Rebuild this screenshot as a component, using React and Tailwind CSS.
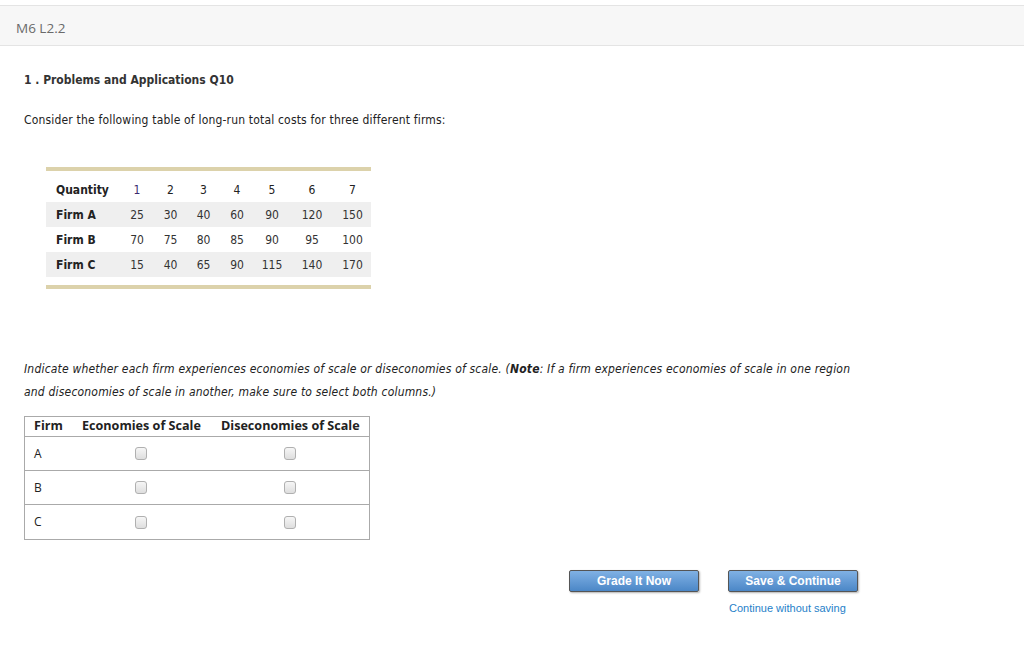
import React from "react";

const body = { fontFamily: '"DejaVu Sans Condensed", "DejaVu Sans", Verdana, sans-serif' };
const open = { fontFamily: '"Open Sans", "Noto Sans", sans-serif' };

const qty = [1, 2, 3, 4, 5, 6, 7];
const rows = [
  { name: "Firm A", vals: [25, 30, 40, 60, 90, 120, 150], shade: true },
  { name: "Firm B", vals: [70, 75, 80, 85, 90, 95, 100], shade: false },
  { name: "Firm C", vals: [15, 40, 65, 90, 115, 140, 170], shade: true },
];
const colW = ["w-[74px]", "w-[34px]", "w-[33px]", "w-[33px]", "w-[34px]", "w-[36px]", "w-[44px]", "w-[37px]"];

function Check() {
  return (
    <span className="inline-block w-[12px] h-[13px] rounded-[3px] border border-[#b0b0b0] bg-gradient-to-b from-[#f6f6f6] to-[#dedede]" />
  );
}

export default function App() {
  return (
    <div className="w-[1024px] h-[652px] bg-white text-[#222] overflow-hidden" style={body}>
      <div className="h-[5px]" />
      <div className="h-[41px] bg-[#f7f7f7] border-t border-b border-[#e4e4e4] flex items-center pl-[16px] pt-[5px]" style={open}>
        <span className="text-[13.5px] text-[#6a6a6a]">M6 L2.2</span>
      </div>

      <div className="pl-[24px]">
        <div className="mt-[26px] text-[12px] font-bold text-[#333] leading-[16px]">1 . Problems and Applications Q10</div>
        <div className="mt-[24px] text-[12px] leading-[16px] tracking-[0.18px]">Consider the following table of long-run total costs for three different firms:</div>

        <div className="ml-[22px] mt-[39px] w-[325px] border-t-[4px] border-b-[4px] border-[#dcd2ab] pt-[6px] pb-[8px]">
          <div className="flex items-center h-[25px] text-[12px]">
            <div className={`${colW[0]} pl-[10px] font-bold`}>Quantity</div>
            {qty.map((q, i) => (
              <div key={q} className={`${colW[i + 1]} text-center ${i === 0 ? "text-[#3a2a6e]" : "text-[#222]"}`}>{q}</div>
            ))}
          </div>
          {rows.map((r) => (
            <div key={r.name} className={`flex items-center h-[25px] text-[12px] ${r.shade ? "bg-[#efefef]" : ""}`}>
              <div className={`${colW[0]} pl-[10px] font-bold`}>{r.name}</div>
              {r.vals.map((v, i) => (
                <div key={i} className={`${colW[i + 1]} text-center text-[#333]`}>{v}</div>
              ))}
            </div>
          ))}
        </div>

        <div className="mt-[69px] text-[12px] italic leading-[23px] text-[#222] w-[840px] tracking-[0.19px]">
          Indicate whether each firm experiences economies of scale or diseconomies of scale. (<b>Note</b>: If a firm experiences economies of scale in one region and diseconomies of scale in another, make sure to select both columns.)
        </div>

        <div className="mt-[12px] w-[346px] border border-[#aaaaaa] text-[12px]" style={open}>
          <div className="flex items-center h-[20px] font-bold text-[12.6px] border-b border-[#aaaaaa]">
            <div className="w-[57px] pl-[9px]">Firm</div>
            <div className="w-[138px]">Economies of Scale</div>
            <div className="flex-1 pl-[1px]">Diseconomies of Scale</div>
          </div>
          {["A", "B", "C"].map((f, i) => (
            <div key={f} className={`flex items-center h-[34px] ${i < 2 ? "border-b border-[#aaaaaa]" : ""}`}>
              <div className="w-[94px] pl-[9px]">{f}</div>
              <div className="w-[44px] flex justify-center"><Check /></div>
              <div className="w-[105px]" />
              <div className="w-[44px] flex justify-center"><Check /></div>
            </div>
          ))}
        </div>

        <div className="flex ml-[545px] mt-[30px] gap-[29px]" style={{ fontFamily: '"Liberation Sans", Arial, sans-serif' }}>
          <div className="flex flex-col">
            <button className="w-[130px] h-[22px] rounded-[2px] border border-[#555] bg-gradient-to-b from-[#80b1e4] to-[#4b87c7] text-white font-bold text-[12px] shadow-[1px_1px_2px_rgba(0,0,0,0.3)]">Grade It Now</button>
          </div>
          <div className="flex flex-col">
            <button className="w-[130px] h-[22px] rounded-[2px] border border-[#555] bg-gradient-to-b from-[#80b1e4] to-[#4b87c7] text-white font-bold text-[12px] shadow-[1px_1px_2px_rgba(0,0,0,0.3)]">Save &amp; Continue</button>
            <a className="mt-[8px] ml-[1px] text-[11px] text-[#1f7fc9]">Continue without saving</a>
          </div>
        </div>
      </div>
    </div>
  );
}
